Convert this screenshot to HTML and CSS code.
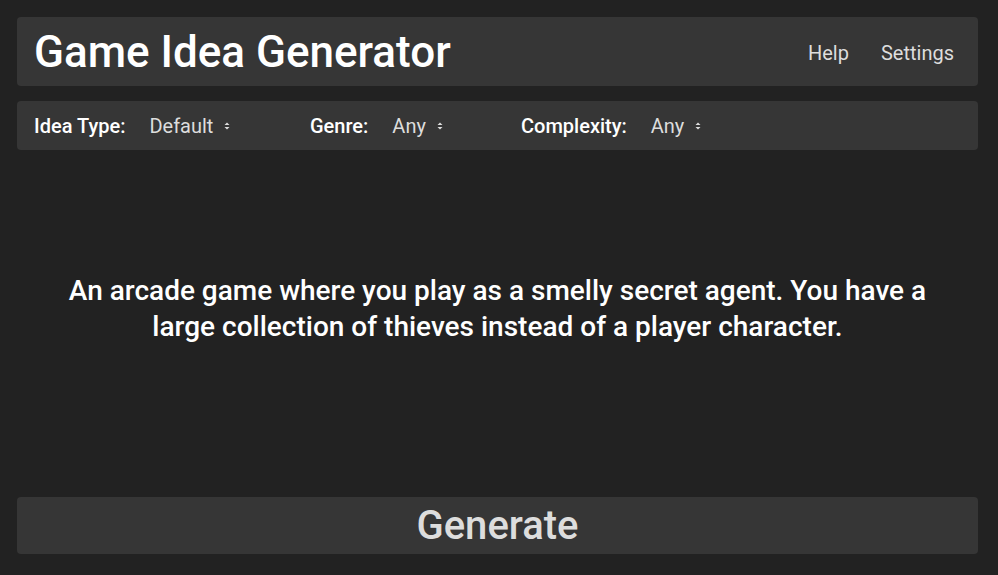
FILE: index.html
```html
<!DOCTYPE html>
<html>
<head>
<meta charset="utf-8">
<link rel="stylesheet" href="styles.css">
</head>
<body>
<div class="app">
  <header class="topbar">
    <h1 class="title">Game Idea Generator</h1>
    <nav class="nav">
      <a class="nav-link">Help</a>
      <a class="nav-link">Settings</a>
    </nav>
  </header>
  <div class="filters">
    <div class="filter filter-type">
      <span class="label">Idea Type:</span>
      <span class="select">Default <span class="arrows"><svg width="6" height="10" viewBox="0 0 6 10"><path d="M0.5 4 L3 1.5 L5.5 4 Z M0.5 6 L3 8.5 L5.5 6 Z" fill="#ddd"/></svg></span></span>
    </div>
    <div class="filter filter-genre">
      <span class="label">Genre:</span>
      <span class="select">Any <span class="arrows"><svg width="6" height="10" viewBox="0 0 6 10"><path d="M0.5 4 L3 1.5 L5.5 4 Z M0.5 6 L3 8.5 L5.5 6 Z" fill="#ddd"/></svg></span></span>
    </div>
    <div class="filter filter-complexity">
      <span class="label">Complexity:</span>
      <span class="select">Any <span class="arrows"><svg width="6" height="10" viewBox="0 0 6 10"><path d="M0.5 4 L3 1.5 L5.5 4 Z M0.5 6 L3 8.5 L5.5 6 Z" fill="#ddd"/></svg></span></span>
    </div>
  </div>
  <main class="idea">
    <p class="idea-text">An arcade game where you play as a smelly secret agent. You have a large collection of thieves instead of a player character.</p>
  </main>
  <button class="generate">Generate</button>
</div>
</body>
</html>
```
FILE: styles.css
```css
html, body {
  margin: 0;
  padding: 0;
  background: #222222;
  height: 100%;
}
body {
  font-family: Roboto, "Noto Sans", sans-serif;
  color: #ffffff;
}
.app {
  box-sizing: border-box;
  height: 575px;
  padding: 17px 20px 21px 17px;
  display: flex;
  flex-direction: column;
}
.topbar {
  background: #363636;
  border-radius: 4px;
  height: 69px;
  display: flex;
  align-items: center;
  justify-content: space-between;
  padding: 0 24px 0 17px;
  flex-shrink: 0;
}
.title {
  margin: 0;
  font-size: 44px;
  font-weight: 500;
  color: #ffffff;
}
.nav {
  display: flex;
  gap: 32px;
  padding-top: 2px;
}
.nav-link {
  font-size: 20px;
  color: #dddddd;
}
.filters {
  margin-top: 15px;
  background: #363636;
  border-radius: 4px;
  height: 49px;
  display: flex;
  align-items: center;
  padding: 0 17px;
  flex-shrink: 0;
}
.filter {
  display: flex;
  align-items: center;
  font-size: 20px;
}
.filter-type { width: 276px; }
.filter-genre { width: 211px; }
.label {
  font-weight: 500;
  color: #ffffff;
}
.select {
  color: #dddddd;
  display: inline-flex;
  align-items: center;
  margin-left: 24px;
}
.arrows {
  display: inline-flex;
  margin-left: 11px;
}
.idea {
  flex: 1;
  display: flex;
  align-items: center;
  justify-content: center;
  padding: 0 40px;
}
.idea-text {
  margin: 0;
  text-align: center;
  font-size: 28px;
  font-weight: 500;
  line-height: 36px;
  padding-bottom: 30px;
}
.generate {
  flex-shrink: 0;
  height: 57px;
  background: #363636;
  border: none;
  border-radius: 4px;
  color: #dddddd;
  font-family: Roboto, "Noto Sans", sans-serif;
  font-size: 40px;
  font-weight: 500;
  padding: 0;
}
```
